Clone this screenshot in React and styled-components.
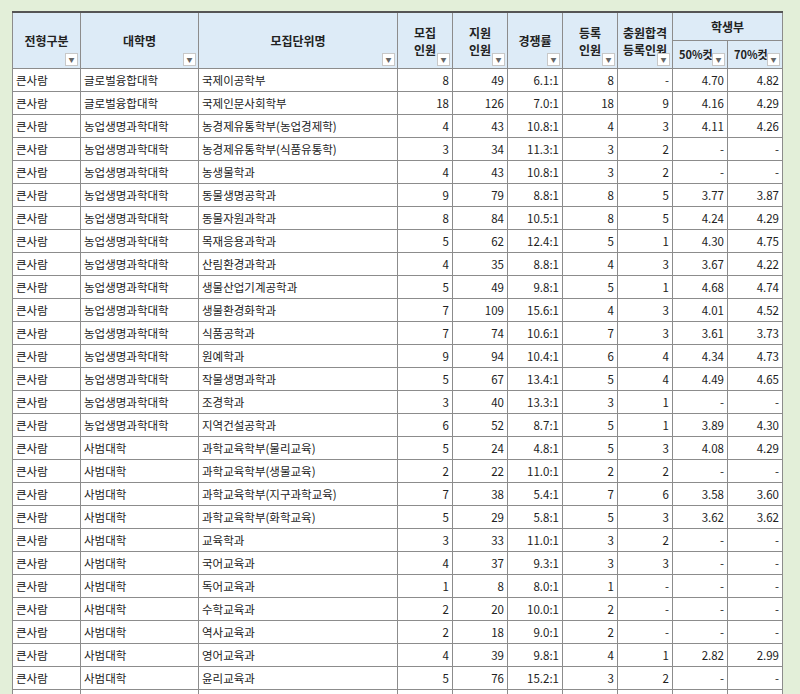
import React from "react";
import styled, { createGlobalStyle } from "styled-components";

const G = createGlobalStyle`
  body{margin:0;background:#e3efd9;font-family:"Noto Sans CJK KR","Noto Sans",sans-serif;overflow:hidden;}
`;
const Page = styled.div`padding:11px 0 0 12px;height:683px;overflow:hidden;`;
const Table = styled.table`
  border-collapse:collapse;table-layout:fixed;width:770px;background:#fff;font-size:11.5px;color:#222;
  border-top:2px solid #555;
`;
const Th = styled.th`
  background:#ddebf7;border:1px solid #8c8c8c;position:relative;font-weight:700;font-size:12px;
  padding:0;line-height:17px;text-align:center;vertical-align:middle;height:${p=>p.h||26}px;
`;
const Td = styled.td`
  border:1px solid #8c8c8c;height:23px;box-sizing:border-box;padding:0 3px;white-space:nowrap;overflow:hidden;
  line-height:15px;text-align:${p=>p.r?"right":"left"};
`;
const Filt = styled.span`
  position:absolute;right:2px;bottom:2px;width:11px;height:11px;border:1px solid #c8c8c8;background:#fff;
  font-size:6px;line-height:11px;color:#666;text-align:center;
`;
const F=()=> <Filt>▼</Filt>;

const raw = `글로벌융합대학|국제이공학부|8|49|6.1:1|8|-|4.70|4.82
글로벌융합대학|국제인문사회학부|18|126|7.0:1|18|9|4.16|4.29
농업생명과학대학|농경제유통학부(농업경제학)|4|43|10.8:1|4|3|4.11|4.26
농업생명과학대학|농경제유통학부(식품유통학)|3|34|11.3:1|3|2|-|-
농업생명과학대학|농생물학과|4|43|10.8:1|3|2|-|-
농업생명과학대학|동물생명공학과|9|79|8.8:1|8|5|3.77|3.87
농업생명과학대학|동물자원과학과|8|84|10.5:1|8|5|4.24|4.29
농업생명과학대학|목재응용과학과|5|62|12.4:1|5|1|4.30|4.75
농업생명과학대학|산림환경과학과|4|35|8.8:1|4|3|3.67|4.22
농업생명과학대학|생물산업기계공학과|5|49|9.8:1|5|1|4.68|4.74
농업생명과학대학|생물환경화학과|7|109|15.6:1|4|3|4.01|4.52
농업생명과학대학|식품공학과|7|74|10.6:1|7|3|3.61|3.73
농업생명과학대학|원예학과|9|94|10.4:1|6|4|4.34|4.73
농업생명과학대학|작물생명과학과|5|67|13.4:1|5|4|4.49|4.65
농업생명과학대학|조경학과|3|40|13.3:1|3|1|-|-
농업생명과학대학|지역건설공학과|6|52|8.7:1|5|1|3.89|4.30
사범대학|과학교육학부(물리교육)|5|24|4.8:1|5|3|4.08|4.29
사범대학|과학교육학부(생물교육)|2|22|11.0:1|2|2|-|-
사범대학|과학교육학부(지구과학교육)|7|38|5.4:1|7|6|3.58|3.60
사범대학|과학교육학부(화학교육)|5|29|5.8:1|5|3|3.62|3.62
사범대학|교육학과|3|33|11.0:1|3|2|-|-
사범대학|국어교육과|4|37|9.3:1|3|3|-|-
사범대학|독어교육과|1|8|8.0:1|1|-|-|-
사범대학|수학교육과|2|20|10.0:1|2|-|-|-
사범대학|역사교육과|2|18|9.0:1|2|-|-|-
사범대학|영어교육과|4|39|9.8:1|4|1|2.82|2.99
사범대학|윤리교육과|5|76|15.2:1|3|2|-|-`;
const rows = raw.split("\n").map(l=>l.split("|"));
const widths=[68,118,199,55,55,55,55,55,55,55];

export default function App(){
  return <Page><G/>
    <Table>
      <colgroup>{widths.map((w,i)=><col key={i} style={{width:w}}/>)}</colgroup>
      <thead>
        <tr>
          <Th rowSpan={2} h={27}>전형구분<F/></Th>
          <Th rowSpan={2}>대학명<F/></Th>
          <Th rowSpan={2}>모집단위명<F/></Th>
          <Th rowSpan={2}>모집<br/>인원<F/></Th>
          <Th rowSpan={2}>지원<br/>인원<F/></Th>
          <Th rowSpan={2}>경쟁률<F/></Th>
          <Th rowSpan={2}>등록<br/>인원<F/></Th>
          <Th rowSpan={2}>충원합격<br/>등록인원<F/></Th>
          <Th colSpan={2} h={27}>학생부</Th>
        </tr>
        <tr>
          <Th h={27} style={{textAlign:"left",paddingLeft:6,fontSize:11}}>50%컷<F/></Th>
          <Th h={27} style={{textAlign:"left",paddingLeft:6,fontSize:11}}>70%컷<F/></Th>
        </tr>
      </thead>
      <tbody>
        {rows.map((r,i)=><tr key={i}>
          <Td>큰사람</Td>
          {r.map((v,j)=><Td r={j>1} key={j}>{v}</Td>)}
        </tr>)}
        <tr><Td/><Td/><Td/><Td/><Td/><Td/><Td/><Td/><Td/><Td/></tr>
      </tbody>
    </Table>
  </Page>;
}
